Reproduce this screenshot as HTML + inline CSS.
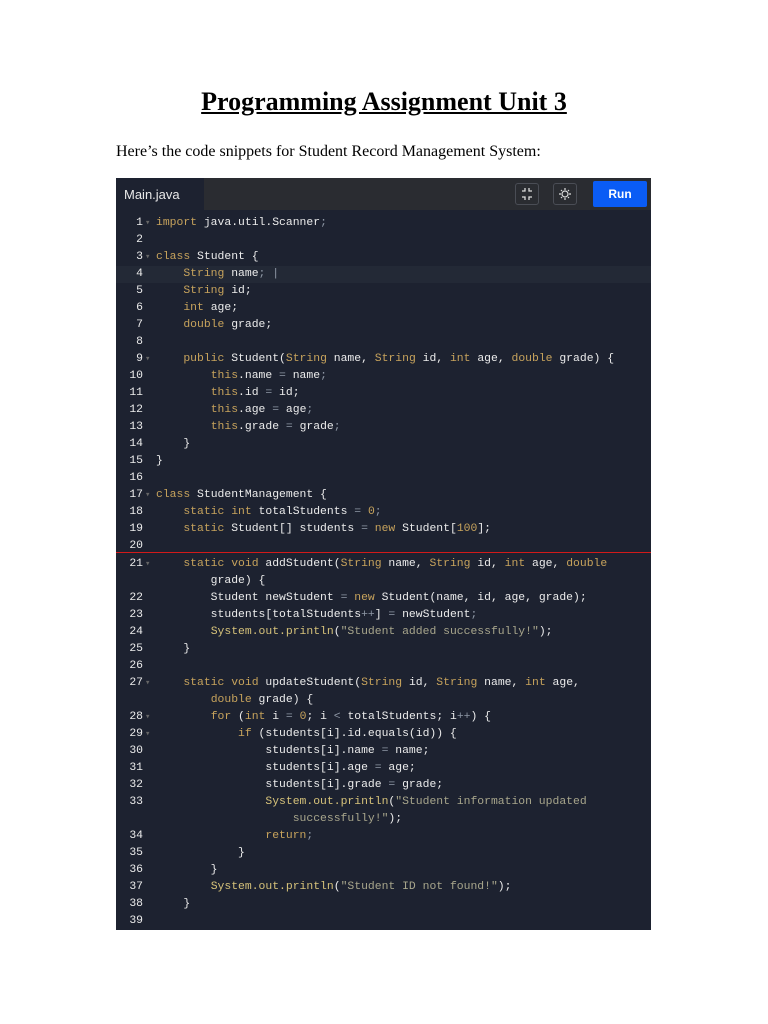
<!DOCTYPE html>
<html><head><meta charset="utf-8"><style>
body{margin:0;background:#fff;width:768px;height:1024px;position:relative;font-family:"Liberation Serif",serif;}
h1{position:absolute;top:87px;left:0;width:768px;text-align:center;margin:0;font-size:26px;font-weight:bold;text-decoration:underline;color:#000;}
.p{position:absolute;top:143px;left:116px;font-size:16px;color:#000;}
.box{position:absolute;left:116px;top:178px;width:535px;height:752px;background:#1d2230;}
.hdr{position:absolute;left:0;top:0;width:535px;height:32px;background:#2a2c31;}
.tab{position:absolute;left:0;top:0;width:88px;height:35px;background:#1d2230;color:#e8e8e8;font-family:"Liberation Sans",sans-serif;font-size:13px;line-height:33px;padding-left:8px;box-sizing:border-box;}
.ib{position:absolute;top:5px;width:24px;height:22px;border:1px solid #4a4d55;border-radius:3px;box-sizing:border-box;}
.run{position:absolute;left:477px;top:3px;width:54px;height:26px;background:#0a5cf5;border-radius:2px;color:#fff;font-family:"Liberation Sans",sans-serif;font-weight:bold;font-size:12px;text-align:center;line-height:26px;}
.code{position:absolute;left:0;top:37px;width:535px;font-family:"Liberation Mono",monospace;font-size:11.4px;color:#ececec;}
.l{height:17px;line-height:17px;white-space:pre;position:relative;}
.n{position:absolute;left:0;width:27px;text-align:right;color:#ececec;}
.f{position:absolute;left:29px;color:#666;font-size:9px;}
.c{position:absolute;left:40px;}
.k{color:#c7a35c}.o{color:#8f98a6}.s{color:#a8a68c}.y{color:#d6c27a}
.red{position:absolute;left:0;top:374px;width:535px;height:1px;background:#d21a1a;}
.cur{background:#232936;}
</style></head><body>
<h1>Programming Assignment Unit 3</h1>
<div class="p">Here’s the code snippets for Student Record Management System:</div>
<div class="box">
<div class="hdr"></div>
<div class="tab">Main.java</div>
<div class="ib" style="left:399px"><svg width="22" height="20" viewBox="0 0 22 20"><path d="M6 7h3V4M16 7h-3V4M6 13h3v3M16 13h-3v3" stroke="#ddd" stroke-width="1.3" fill="none"/></svg></div>
<div class="ib" style="left:437px"><svg width="22" height="20" viewBox="0 0 22 20"><circle cx="11" cy="10" r="3" stroke="#ddd" fill="none" stroke-width="1.2"/><path d="M11 4v2M11 14v2M5 10h2M15 10h2M7 6l1 1M14 13l1 1M7 14l1-1M14 7l1-1" stroke="#ddd" stroke-width="1.2"/></svg></div>
<div class="run">Run</div>
<div class="code">
<div class="l"><span class="n">1</span><span class="f">▾</span><span class="c"><span class="k">import</span> java.util.Scanner<span class="o">;</span></span></div>
<div class="l"><span class="n">2</span></div>
<div class="l"><span class="n">3</span><span class="f">▾</span><span class="c"><span class="k">class</span> Student {</span></div>
<div class="l cur"><span class="n">4</span><span class="c">    <span class="k">String</span> name<span class="o">;</span> <span class="o">|</span></span></div>
<div class="l"><span class="n">5</span><span class="c">    <span class="k">String</span> id;</span></div>
<div class="l"><span class="n">6</span><span class="c">    <span class="k">int</span> age;</span></div>
<div class="l"><span class="n">7</span><span class="c">    <span class="k">double</span> grade;</span></div>
<div class="l"><span class="n">8</span></div>
<div class="l"><span class="n">9</span><span class="f">▾</span><span class="c">    <span class="k">public</span> Student(<span class="k">String</span> name, <span class="k">String</span> id, <span class="k">int</span> age, <span class="k">double</span> grade) {</span></div>
<div class="l"><span class="n">10</span><span class="c">        <span class="k">this</span>.name <span class="o">=</span> name<span class="o">;</span></span></div>
<div class="l"><span class="n">11</span><span class="c">        <span class="k">this</span>.id <span class="o">=</span> id;</span></div>
<div class="l"><span class="n">12</span><span class="c">        <span class="k">this</span>.age <span class="o">=</span> age<span class="o">;</span></span></div>
<div class="l"><span class="n">13</span><span class="c">        <span class="k">this</span>.grade <span class="o">=</span> grade<span class="o">;</span></span></div>
<div class="l"><span class="n">14</span><span class="c">    }</span></div>
<div class="l"><span class="n">15</span><span class="c">}</span></div>
<div class="l"><span class="n">16</span></div>
<div class="l"><span class="n">17</span><span class="f">▾</span><span class="c"><span class="k">class</span> StudentManagement {</span></div>
<div class="l"><span class="n">18</span><span class="c">    <span class="k">static int</span> totalStudents <span class="o">=</span> <span class="k">0</span><span class="o">;</span></span></div>
<div class="l"><span class="n">19</span><span class="c">    <span class="k">static</span> Student[] students <span class="o">=</span> <span class="k">new</span> Student[<span class="k">100</span>];</span></div>
<div class="l"><span class="n">20</span></div>
<div class="l" style="margin-top:1px"><span class="n">21</span><span class="f">▾</span><span class="c">    <span class="k">static void</span> addStudent(<span class="k">String</span> name, <span class="k">String</span> id, <span class="k">int</span> age, <span class="k">double</span></span></div>
<div class="l"><span class="c">        grade) {</span></div>
<div class="l"><span class="n">22</span><span class="c">        Student newStudent <span class="o">=</span> <span class="k">new</span> Student(name, id, age, grade);</span></div>
<div class="l"><span class="n">23</span><span class="c">        students[totalStudents<span class="o">++</span>] <span class="o">=</span> newStudent<span class="o">;</span></span></div>
<div class="l"><span class="n">24</span><span class="c">        <span class="y">System.out.println</span>(<span class="s">"Student added successfully!"</span>);</span></div>
<div class="l"><span class="n">25</span><span class="c">    }</span></div>
<div class="l"><span class="n">26</span></div>
<div class="l"><span class="n">27</span><span class="f">▾</span><span class="c">    <span class="k">static void</span> updateStudent(<span class="k">String</span> id, <span class="k">String</span> name, <span class="k">int</span> age,</span></div>
<div class="l"><span class="c">        <span class="k">double</span> grade) {</span></div>
<div class="l"><span class="n">28</span><span class="f">▾</span><span class="c">        <span class="k">for</span> (<span class="k">int</span> i <span class="o">=</span> <span class="k">0</span>; i <span class="o">&lt;</span> totalStudents; i<span class="o">++</span>) {</span></div>
<div class="l"><span class="n">29</span><span class="f">▾</span><span class="c">            <span class="k">if</span> (students[i].id.equals(id)) {</span></div>
<div class="l"><span class="n">30</span><span class="c">                students[i].name <span class="o">=</span> name;</span></div>
<div class="l"><span class="n">31</span><span class="c">                students[i].age <span class="o">=</span> age;</span></div>
<div class="l"><span class="n">32</span><span class="c">                students[i].grade <span class="o">=</span> grade;</span></div>
<div class="l"><span class="n">33</span><span class="c">                <span class="y">System.out.println</span>(<span class="s">"Student information updated</span></span></div>
<div class="l"><span class="c"><span class="s">                    successfully!"</span>);</span></div>
<div class="l"><span class="n">34</span><span class="c">                <span class="k">return</span><span class="o">;</span></span></div>
<div class="l"><span class="n">35</span><span class="c">            }</span></div>
<div class="l"><span class="n">36</span><span class="c">        }</span></div>
<div class="l"><span class="n">37</span><span class="c">        <span class="y">System.out.println</span>(<span class="s">"Student ID not found!"</span>);</span></div>
<div class="l"><span class="n">38</span><span class="c">    }</span></div>
<div class="l"><span class="n">39</span></div>
</div>
<div class="red"></div>
</div>
</body></html>
